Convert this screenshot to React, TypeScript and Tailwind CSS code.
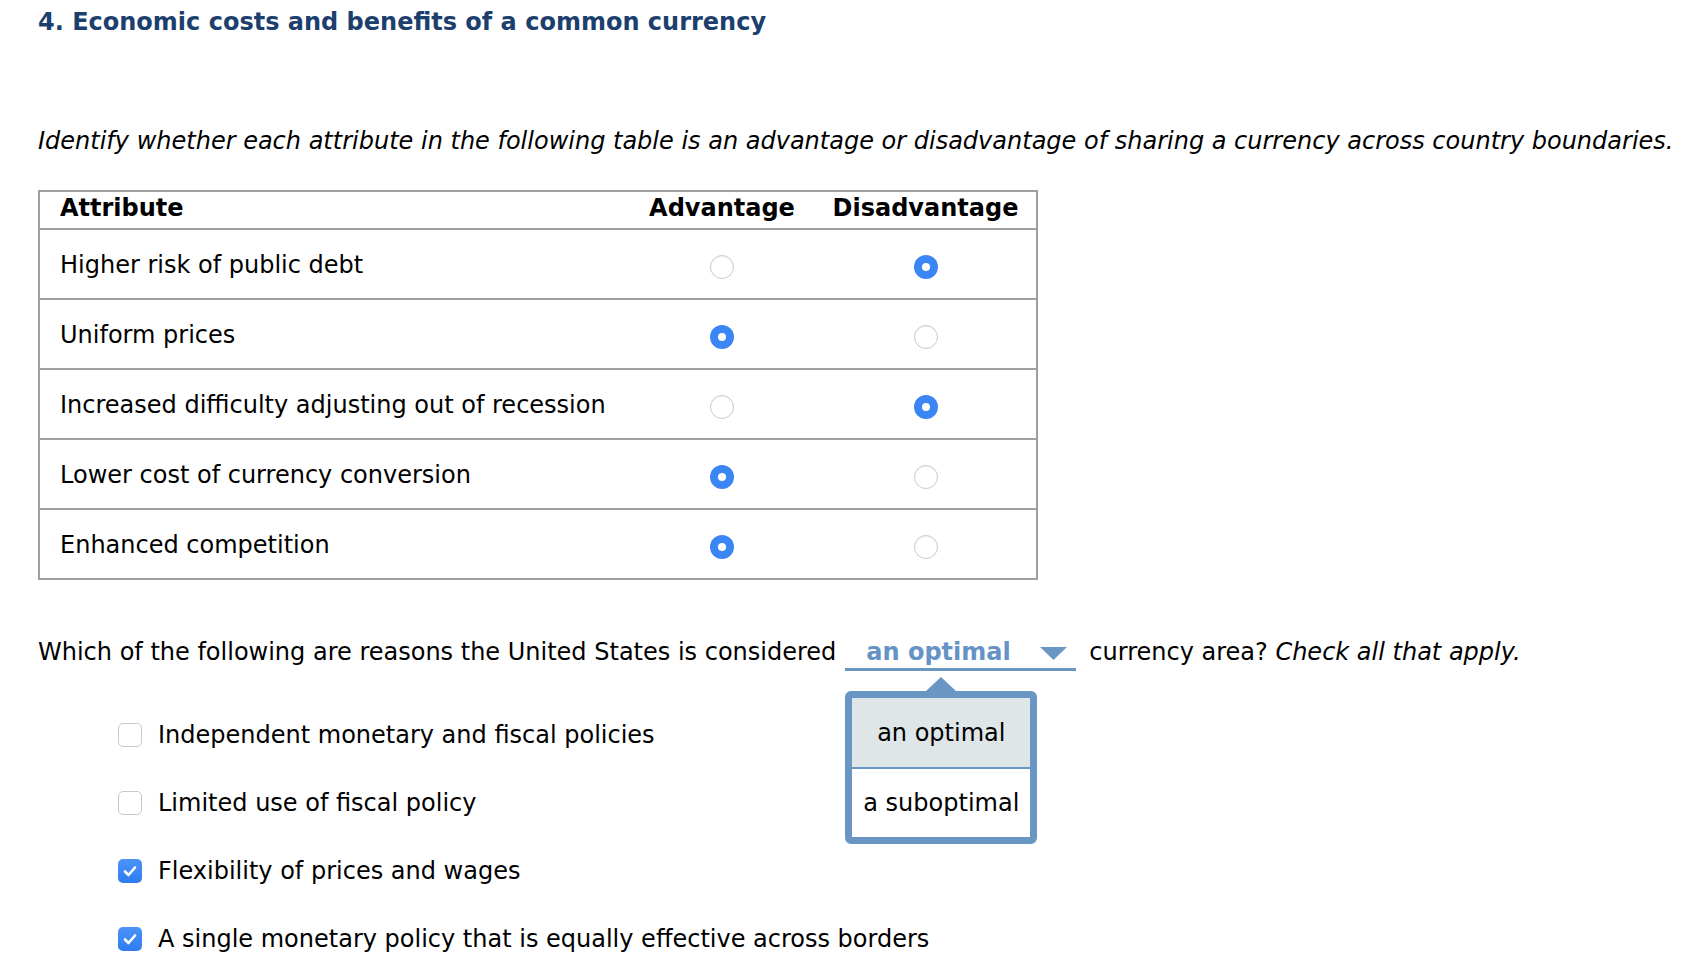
import React from "react";

const FONT = { fontFamily: '"DejaVu Sans", Verdana, sans-serif' };

function Radio({ checked }: { checked: boolean }) {
  if (checked) {
    return (
      <div className="w-[24px] h-[24px] rounded-full bg-[#3b86f4] flex items-center justify-center">
        <div className="w-[8px] h-[8px] rounded-full bg-white" />
      </div>
    );
  }
  return (
    <div className="w-[24px] h-[24px] rounded-full bg-white border border-[#c9c9c9] shadow-[inset_0_1px_1px_rgba(0,0,0,0.06)]" />
  );
}

function Checkbox({ checked }: { checked: boolean }) {
  if (checked) {
    return (
      <div className="w-[24px] h-[24px] rounded-[5px] bg-gradient-to-b from-[#4b93f8] to-[#2f7cf1] flex items-center justify-center">
        <svg width="16" height="16" viewBox="0 0 16 16">
          <path d="M3 8.5 L6.5 12 L13 4.5" fill="none" stroke="white" strokeWidth="2.6" strokeLinecap="round" strokeLinejoin="round" />
        </svg>
      </div>
    );
  }
  return <div className="w-[24px] h-[24px] rounded-[5px] bg-white border border-[#c9c9c9]" />;
}

const rows: { label: string; adv: boolean }[] = [
  { label: "Higher risk of public debt", adv: false },
  { label: "Uniform prices", adv: true },
  { label: "Increased difficulty adjusting out of recession", adv: false },
  { label: "Lower cost of currency conversion", adv: true },
  { label: "Enhanced competition", adv: true },
];

const checks: { label: string; checked: boolean }[] = [
  { label: "Independent monetary and fiscal policies", checked: false },
  { label: "Limited use of fiscal policy", checked: false },
  { label: "Flexibility of prices and wages", checked: true },
  { label: "A single monetary policy that is equally effective across borders", checked: true },
];

export default function App() {
  return (
    <div className="w-[1688px] h-[962px] bg-white overflow-hidden text-black pl-[38px]" style={FONT}>
      <h1 className="pt-[8px] text-[24px] leading-[28px] font-bold text-[#1c3f6e]">
        4. Economic costs and benefits of a common currency
      </h1>

      <p className="mt-[91px] text-[24px] leading-[28px] italic whitespace-nowrap">
        Identify whether each attribute in the following table is an advantage or disadvantage of sharing a currency across country boundaries.
      </p>

      <div className="mt-[35px] w-[1000px] border-2 border-[#a0a0a0]">
        <div className="flex h-[36px] text-[24px] leading-[28px] font-bold pt-[2px]">
          <div className="w-[589px] pl-[20px]">Attribute</div>
          <div className="w-[186px] text-center">Advantage</div>
          <div className="w-[221px] text-center">Disadvantage</div>
        </div>
        {rows.map((r) => (
          <div key={r.label} className="flex h-[70px] border-t-2 border-[#a0a0a0] text-[24px] leading-[28px]">
            <div className="w-[589px] pl-[20px] pt-[21px]">{r.label}</div>
            <div className="w-[186px] flex justify-center pt-[25px]">
              <Radio checked={r.adv} />
            </div>
            <div className="w-[221px] flex justify-center pt-[25px]">
              <Radio checked={!r.adv} />
            </div>
          </div>
        ))}
      </div>

      <div className="mt-[58px] flex items-end text-[24px] leading-[28px] whitespace-nowrap">
        <span className="pb-[5px]">Which of the following are reasons the United States is considered</span>
        <div className="relative ml-[9px] w-[231px] border-b-[3px] border-[#6a96c4] pl-[21px] pr-[9px] pb-[2px] flex items-center justify-between">
          <span className="font-bold text-[#6693c5]">an optimal</span>
          <svg width="27" height="13" viewBox="0 0 27 13" className="mt-[2px]">
            <polygon points="0,0 27,0 13.5,13" fill="#6a96c4" />
          </svg>
          <div className="absolute left-0 top-[39px] w-[192px]">
            <div className="flex justify-center">
              <svg width="30" height="14" viewBox="0 0 30 14" className="block">
                <polygon points="15,0 30,14 0,14" fill="#6a96c4" />
              </svg>
            </div>
            <div className="border-[7px] border-[#6a96c4] rounded-[6px] bg-white font-normal text-black">
              <div className="h-[69px] bg-[#dfe6e8] flex items-center justify-center">an optimal</div>
              <div className="h-[2px] bg-[#6a96c4]" />
              <div className="h-[68px] flex items-center justify-center">a suboptimal</div>
            </div>
          </div>
        </div>
        <span className="ml-[13px] pb-[5px]">
          currency area? <span className="italic">Check all that apply.</span>
        </span>
      </div>

      <div className="mt-[30px] ml-[80px] text-[24px] leading-[28px]">
        {checks.map((c) => (
          <div key={c.label} className="h-[68px] flex items-center gap-[16px] whitespace-nowrap">
            <Checkbox checked={c.checked} />
            <span>{c.label}</span>
          </div>
        ))}
      </div>
    </div>
  );
}
